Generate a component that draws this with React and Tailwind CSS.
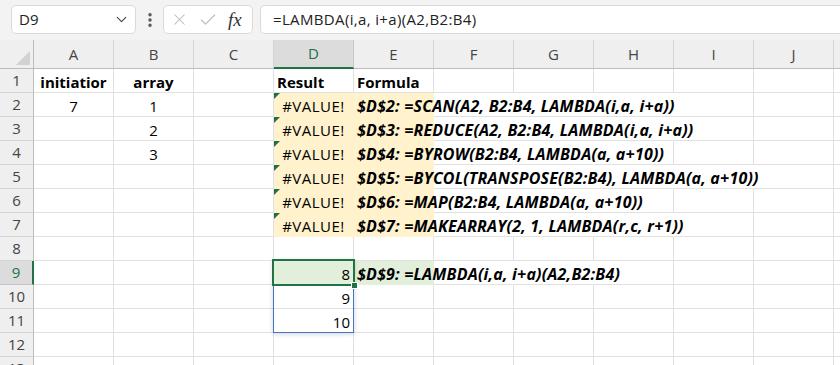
import { ChevronDown, X, Check, EllipsisVertical } from "lucide-react"

const cols = ["A", "B", "C", "D", "E", "F", "G", "H", "I", "J"]

const err = { t: "#VALUE!", c: true, bg: "y", tri: true }

const rows = [
    { A: { t: "initiatior", b: true, c: true }, B: { t: "array", b: true, c: true }, D: { t: "Result", b: true }, E: { t: "Formula", b: true } },
    { A: { t: "7", c: true }, B: { t: "1", c: true }, D: err, E: { t: "$D$2: =SCAN(A2, B2:B4, LAMBDA(i,a, i+a))", f: true, bg: "y", span: 5 } },
    { B: { t: "2", c: true }, D: err, E: { t: "$D$3: =REDUCE(A2, B2:B4, LAMBDA(i,a, i+a))", f: true, bg: "y", span: 5 } },
    { B: { t: "3", c: true }, D: err, E: { t: "$D$4: =BYROW(B2:B4, LAMBDA(a, a+10))", f: true, bg: "y", span: 4 } },
    { D: err, E: { t: "$D$5: =BYCOL(TRANSPOSE(B2:B4), LAMBDA(a, a+10))", f: true, bg: "y", span: 6 } },
    { D: err, E: { t: "$D$6: =MAP(B2:B4, LAMBDA(a, a+10))", f: true, bg: "y", span: 4 } },
    { D: err, E: { t: "$D$7: =MAKEARRAY(2, 1, LAMBDA(r,c, r+1))", f: true, bg: "y", span: 5 } },
    {},
    { D: { t: "8", r: true, bg: "g", sel: true }, E: { t: "$D$9: =LAMBDA(i,a, i+a)(A2,B2:B4)", f: true, bg: "g", span: 4 } },
    { D: { t: "9", r: true } },
    { D: { t: "10", r: true } },
    {},
    {},
]

const fills = {
    y: "bg-[#fff2cc] border-b-[#fff2cc]",
    g: "bg-[#e2efda] border-b-[#e2efda]",
}
const fillRight = {
    y: "border-r-[#fff2cc]",
    g: "border-r-[#e2efda]",
}

function Cell({ cell, hideRight }) {
    const c = cell || {}
    const fill = c.bg ? fills[c.bg] : "border-b-[#e1e1e1]"
    let right = "border-r-[#e1e1e1]"
    if (c.bg) right = fillRight[c.bg]
    if (hideRight) right = "border-r-transparent"
    const align = c.c ? "justify-center" : c.r ? "justify-end pr-[3px]" : "justify-start pl-[3px]"
    let text = "text-[15px] font-normal"
    if (c.b) text = "text-[15px] font-bold"
    if (c.f) text = "text-[16px] font-bold italic tracking-[0.2px]"
    if (c.tri) text = "text-[15px] font-normal tracking-[0.5px]"
    return (
        <div className={`relative flex h-full w-[80px] shrink-0 items-center border-b border-r ${fill} ${right} ${align} ${c.f ? "z-10" : ""}`}>
            {c.tri && (
                <div className="absolute left-0 top-0 h-0 w-0 border-r-[6px] border-t-[6px] border-r-transparent border-t-[#1e7145]" />
            )}
            {c.t && (
                <span className={`whitespace-nowrap pt-[3px] text-black ${text}`}>{c.t}</span>
            )}
            {c.sel && (
                <>
                    <div className="pointer-events-none absolute -left-[1px] -top-[1px] z-20 h-[73px] w-[81px] border border-[#4472c4] shadow-[0_1px_5px_rgba(0,0,0,0.18)]" />
                    <div className="pointer-events-none absolute -left-[2px] -top-[2px] z-20 h-[27px] w-[83px] border-2 border-[#217346]" />
                    <div className="absolute left-[77px] top-[21px] z-30 h-[7px] w-[7px] border border-white bg-[#217346]" />
                </>
            )}
        </div>
    )
}

function Row({ n, data }) {
    const active = n === 9
    let hideUntil = -1
    return (
        <div className="flex h-[24px]">
            <div className={`flex h-full w-[34px] shrink-0 items-center justify-center border-b text-[15px] ${active ? "border-r-2 border-b-[#c6c6c6] border-r-[#217346] bg-[#dcdcdc] text-[#1e7145]" : "border-r border-b-[#d4d4d4] border-r-[#bcbcbc] bg-[#efefef] text-[#444]"}`}>
                {n}
            </div>
            {cols.map((col, i) => {
                const cell = data[col]
                if (cell && cell.span) hideUntil = i + cell.span - 2
                return <Cell key={col} cell={cell} hideRight={i <= hideUntil} />
            })}
            <div className="h-full flex-1 border-b border-b-[#e1e1e1]" />
        </div>
    )
}

export default function App() {
    return (
        <div className="h-[365px] w-[840px] overflow-hidden bg-white font-['Open_Sans',sans-serif] text-[#222]">
            <div className="flex h-[40px] items-center bg-[#f3f3f3] pl-[11px] pb-[4px] pt-[3px]">
                <div className="flex h-[29px] w-[125px] items-center justify-between rounded-[5px] border border-[#dadada] bg-white pl-[7px] pr-[5px] text-[15px] text-[#222]">
                    <span>D9</span>
                    <ChevronDown className="h-[17px] w-[17px] text-[#444]" strokeWidth={1.6} />
                </div>
                <div className="flex w-[27px] justify-center">
                    <EllipsisVertical className="h-[18px] w-[18px] text-[#555]" strokeWidth={2.6} />
                </div>
                <div className="flex h-[29px] w-[90px] items-center rounded-[5px] border border-[#dadada] bg-white pl-[6px]">
                    <X className="h-[19px] w-[19px] text-[#b9b9b9]" strokeWidth={1.3} />
                    <Check className="ml-[9px] h-[20px] w-[20px] text-[#b9b9b9]" strokeWidth={1.3} />
                    <span className="ml-[10px] font-['Liberation_Serif',serif] text-[19px] italic leading-none text-[#333]">fx</span>
                </div>
                <div className="ml-[7px] flex h-[29px] flex-1 items-center rounded-l-[5px] border border-r-0 border-[#dadada] bg-white pl-[12px] text-[15px] tracking-[0.35px] text-[#222]">
                    =LAMBDA(i,a, i+a)(A2,B2:B4)
                </div>
            </div>
            <div className="flex h-[29px] bg-[#efefef]">
                <div className="relative h-full w-[34px] shrink-0 border-b border-r border-b-[#bcbcbc] border-r-[#bcbcbc]">
                    <div className="absolute bottom-[3px] right-[3px] h-0 w-0 border-b-[14px] border-l-[14px] border-b-[#d2d2d2] border-l-transparent" />
                </div>
                {cols.map((col) => (
                    <div
                        key={col}
                        className={`flex h-full w-[80px] shrink-0 items-center justify-center border-r text-[15px] ${col === "D" ? "border-b-2 border-b-[#217346] border-r-[#c6c6c6] bg-[#dcdcdc] text-[#1e7145]" : "border-b border-b-[#bcbcbc] border-r-[#d4d4d4] text-[#444]"}`}
                    >
                        {col}
                    </div>
                ))}
                <div className="h-full flex-1 border-b border-b-[#bcbcbc]" />
            </div>
            {rows.map((data, i) => (
                <Row key={i} n={i + 1} data={data} />
            ))}
        </div>
    )
}
